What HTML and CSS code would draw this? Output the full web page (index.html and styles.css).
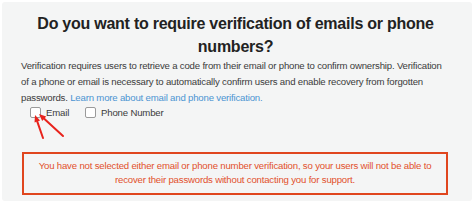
FILE: index.html
```html
<!DOCTYPE html>
<html lang="en">
<head>
    <meta charset="UTF-8">
    <title>Verification</title>
    <link rel="stylesheet" href="styles.css">
</head>
<body>
<div class="panel">
    <h1 class="title">Do you want to require verification of emails or phone numbers?</h1>
    <p class="desc">Verification requires users to retrieve a code from their email or phone to confirm ownership. Verification of a phone or email is necessary to automatically confirm users and enable recovery from forgotten passwords. <a href="#">Learn more about email and phone verification.</a></p>

    <div class="options">
        <label class="option"><span class="box"></span>Email</label>
        <label class="option"><span class="box"></span>Phone Number</label>
        <!-- flechas rojas -->
        <svg class="arrows" width="40" height="38" viewBox="0 0 40 38">
            <g stroke="#e8231c" stroke-width="2" fill="none" stroke-linecap="round">
                <line x1="15" y1="33" x2="9.3" y2="16.6"/>
                <line x1="35" y1="31" x2="16.2" y2="13.7"/>
            </g>
            <g fill="#e8231c">
                <polygon points="7,10 12.1,15.6 6.5,17.6"/>
                <polygon points="11,9 18.2,11.5 14.2,15.9"/>
            </g>
        </svg>
    </div>

    <div class="warning">You have not selected either email or phone number verification, so your users will not be able to recover their passwords without contacting you for support.</div>
</div>
</body>
</html>
```

FILE: styles.css
```css
body {
    margin: 0;
    padding: 2px 2px 3px 2px;
    background-color: #ffffff;
    font-family: "Liberation Sans", Helvetica, Arial, sans-serif;
}
.panel {
    background-color: #f4f5f5;
    border-radius: 3px;
    padding: 8px 22px 6px 19px;
    height: 185px;
}
.title {
    font-size: 16px;
    font-weight: bold;
    letter-spacing: -0.25px;
    color: #222222;
    text-align: center;
    line-height: 23px;
    margin: 2px 0 0 0;
}
.desc {
    font-size: 9.6px;
    letter-spacing: -0.18px;
    line-height: 16px;
    color: #3b3b3b;
    margin: 0;
}
.desc a {
    color: #4b94d2;
    text-decoration: none;
}
.options {
    position: relative;
    display: flex;
    gap: 16px;
    padding-left: 9px;
    height: 13px;
}
.option {
    display: flex;
    align-items: center;
    font-size: 9.6px;
    letter-spacing: -0.18px;
    color: #3b3b3b;
}
.box {
    width: 9px;
    height: 9px;
    border: 1px solid #9a9a9a;
    border-radius: 2px;
    background-color: #fff;
    margin-right: 5px;
}
.arrows {
    position: absolute;
    left: 7px;
    top: -1px;
}
.warning {
    border: 2px solid #e0461e;
    color: #e2502c;
    font-size: 9.6px;
    letter-spacing: -0.18px;
    line-height: 14px;
    text-align: center;
    padding: 5px 12px 6px 12px;
    margin: 33px 2px 0 1px;
}
```
